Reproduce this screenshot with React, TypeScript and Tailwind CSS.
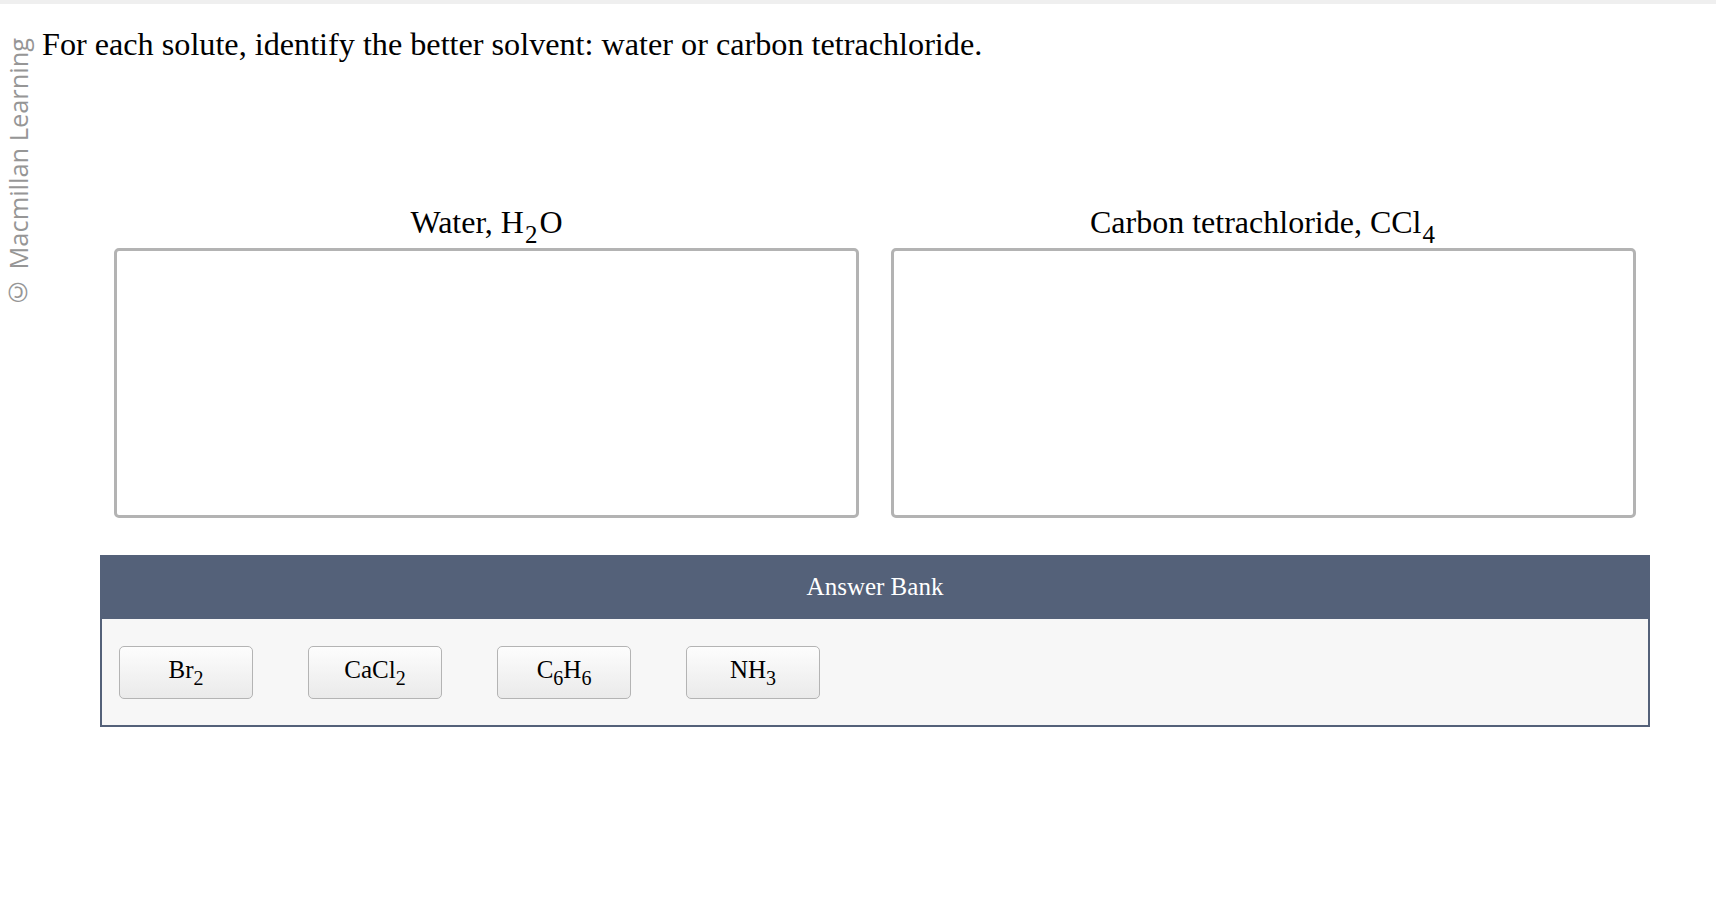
import React from "react";

function LabelSub({ children }: { children: React.ReactNode }) {
  return <span className="relative top-[10px] ml-[1px] mr-[2px] align-baseline text-[25px] leading-none">{children}</span>;
}

function ChipSub({ children }: { children: React.ReactNode }) {
  return <span className="relative top-[7px] align-baseline text-[20px] leading-none">{children}</span>;
}

function Chip({ children }: { children: React.ReactNode }) {
  return (
    <div className="flex h-[53px] w-[134px] items-center justify-center rounded-[5px] border border-[#b4b4b4] bg-gradient-to-b from-[#fdfdfd] to-[#eaeaea] text-[25px] leading-none text-black">
      <span className="-mt-[5px]">{children}</span>
    </div>
  );
}

export default function App() {
  return (
    <div className="min-h-[904px] w-[1716px] bg-white font-['Liberation_Serif','Times_New_Roman',serif] text-black">
      <div className="h-[4px] bg-[#efefef]" />
      <div className="flex">
        <div className="flex w-[42px] shrink-0 flex-col items-start pt-[34px]">
          <div className="ml-[3px] rotate-180 whitespace-nowrap font-['Open_Sans',sans-serif] text-[25.4px] leading-[30px] text-[#969696] [writing-mode:vertical-rl]">
            © Macmillan Learning
          </div>
        </div>
        <div className="w-[1666px]">
          <h1 className="pt-[22px] text-[32.2px] font-normal leading-[37px]">
            For each solute, identify the better solvent: water or carbon tetrachloride.
          </h1>
          <div className="mt-[140px] grid grid-cols-2 gap-[32px] px-[72px]">
            <div>
              <div className="mb-[7px] text-center text-[32px] leading-[38px]">
                Water, H<LabelSub>2</LabelSub>O
              </div>
              <div className="h-[270px] rounded-[5px] border-[3px] border-[#b3b3b3] bg-white" />
            </div>
            <div>
              <div className="mb-[7px] text-center text-[32px] leading-[38px]">
                Carbon tetrachloride, CCl<LabelSub>4</LabelSub>
              </div>
              <div className="h-[270px] rounded-[5px] border-[3px] border-[#b3b3b3] bg-white" />
            </div>
          </div>
          <div className="mx-[58px] mt-[37px]">
            <div className="flex h-[64px] items-center justify-center bg-[#546179] text-[25px] text-white">
              Answer Bank
            </div>
            <div className="flex h-[108px] items-center gap-[55px] border-2 border-t-0 border-[#546179] bg-[#f7f7f7] pl-[17px]">
              <Chip>
                Br<ChipSub>2</ChipSub>
              </Chip>
              <Chip>
                CaCl<ChipSub>2</ChipSub>
              </Chip>
              <Chip>
                C<ChipSub>6</ChipSub>H<ChipSub>6</ChipSub>
              </Chip>
              <Chip>
                NH<ChipSub>3</ChipSub>
              </Chip>
            </div>
          </div>
        </div>
      </div>
    </div>
  );
}
